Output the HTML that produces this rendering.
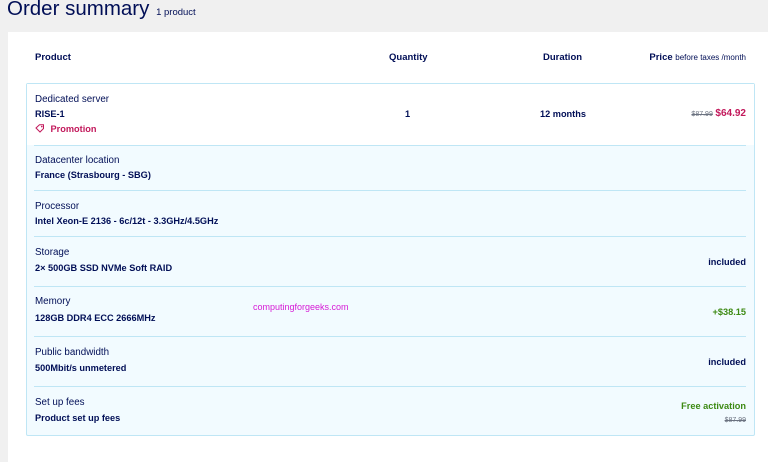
<!DOCTYPE html>
<html><head><meta charset="utf-8"><style>
*{margin:0;padding:0;box-sizing:border-box}
body{width:768px;height:446px;overflow:hidden;background:#f0f0f0;font-family:"Liberation Sans",sans-serif;color:#000e56;position:relative}
.a{position:absolute;white-space:nowrap}
.t{left:7px;top:-3px;font-size:20.5px;color:#000e56}
.t small{font-size:9.5px;margin-left:1px}
.card{position:absolute;left:8px;top:32px;width:770px;height:430px;background:#fff}
.box{position:absolute;left:26px;top:83px;width:729px;height:353px;border:1px solid #bfe6f5;background:#f2fbff;border-radius:2px}
.r1{position:absolute;left:27px;top:84px;width:727px;height:61px;background:#fff}
.sep{position:absolute;left:34px;width:712px;height:1px;background:#bfe6f5}
.h{font-size:9.5px;font-weight:bold;top:52px}
.l{font-size:9.8px;left:35px}
.b{font-size:9.2px;font-weight:bold;left:35px}
.rt{right:22px;font-size:9.2px;font-weight:bold}
.g{color:#3d8a13}
.old{text-decoration:line-through;font-size:7px;color:#6b7280;font-weight:normal}
</style></head><body>
<div class="a t">Order summary <small>1 product</small></div>
<div class="card"></div>
<div class="box"></div>
<div class="r1"></div>
<div class="a h" style="left:35px">Product</div>
<div class="a h" style="left:389px">Quantity</div>
<div class="a h" style="left:543px">Duration</div>
<div class="a h" style="right:22px">Price <span style="font-weight:normal;font-size:8px">before taxes /month</span></div>

<div class="a l" style="top:94px">Dedicated server</div>
<div class="a b" style="top:109px">RISE-1</div>
<div class="a b" style="top:124px;color:#c2185b;left:35px"><svg width="10" height="9" viewBox="0 0 10 9" style="vertical-align:-1px;margin-right:3px"><path d="M1 4L4.5 0.8H8.5V4.5L5 8Z" fill="none" stroke="#c2185b" stroke-width="1"/><circle cx="6.8" cy="2.6" r="0.8" fill="#c2185b"/></svg> Promotion</div>
<div class="a b" style="left:405px;top:109px">1</div>
<div class="a b" style="left:540px;top:109px">12 months</div>
<div class="a rt" style="top:108px"><span class="old">$87.99</span> <span style="color:#c2185b;font-size:10px">$64.92</span></div>

<div class="sep" style="top:145px"></div>
<div class="a l" style="top:155px">Datacenter location</div>
<div class="a b" style="top:170px">France (Strasbourg - SBG)</div>
<div class="sep" style="top:190px"></div>
<div class="a l" style="top:201px">Processor</div>
<div class="a b" style="top:216px">Intel Xeon-E 2136 - 6c/12t - 3.3GHz/4.5GHz</div>
<div class="sep" style="top:236px"></div>
<div class="a l" style="top:247px">Storage</div>
<div class="a b" style="top:263px">2× 500GB SSD NVMe Soft RAID</div>
<div class="a rt" style="top:257px">included</div>
<div class="sep" style="top:286px"></div>
<div class="a l" style="top:296px">Memory</div>
<div class="a b" style="top:313px">128GB DDR4 ECC 2666MHz</div>
<div class="a" style="left:253px;top:302px;font-size:9px;color:#d61ad6">computingforgeeks.com</div>
<div class="a rt g" style="top:307px">+$38.15</div>
<div class="sep" style="top:336px"></div>
<div class="a l" style="top:347px">Public bandwidth</div>
<div class="a b" style="top:363px">500Mbit/s unmetered</div>
<div class="a rt" style="top:357px">included</div>
<div class="sep" style="top:386px"></div>
<div class="a l" style="top:397px">Set up fees</div>
<div class="a b" style="top:413px">Product set up fees</div>
<div class="a rt g" style="top:401px">Free activation</div>
<div class="a rt" style="top:414px"><span class="old">$87.99</span></div>
</body></html>
